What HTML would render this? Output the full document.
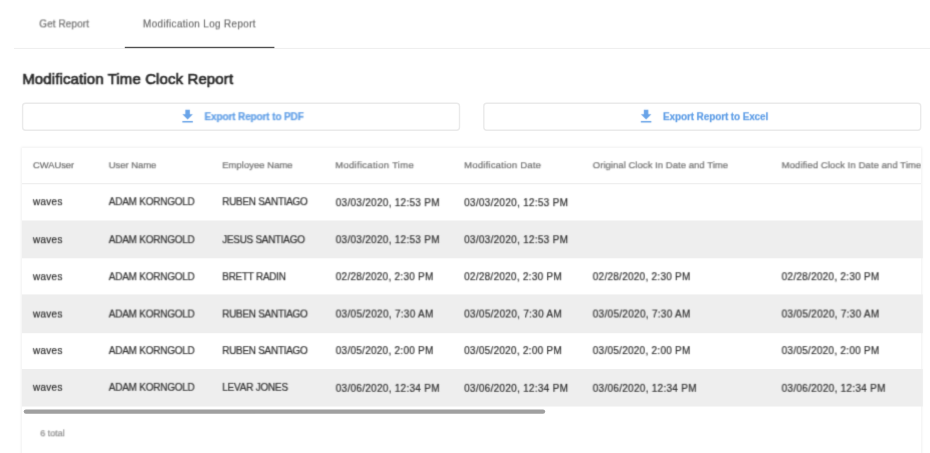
<!DOCTYPE html>
<html>
<head>
<meta charset="utf-8">
<title>Modification Time Clock Report</title>
<style>
*{box-sizing:border-box;margin:0;padding:0}
html,body{width:930px;height:453px;overflow:hidden;background:#fff}
body{font-family:"Liberation Sans",sans-serif;position:relative}
.a{position:absolute}
.t{position:absolute;left:0;top:0;white-space:nowrap;height:20px;line-height:20px;transform-origin:0 0;filter:url(#sb);-webkit-text-stroke:0.2px currentColor}
#bg{position:absolute;left:0;top:0}
nav,main,table,thead,tbody,tr{display:contents}
td:empty{display:none}
th,td,h2,a,button.t{display:block;font-weight:normal;text-align:left;border:0;background:none;font-family:inherit;text-decoration:none}
.ic{position:absolute;filter:url(#sb)}
.card{left:22px;top:148px;width:899px;height:320px;background:#fff;box-shadow:0 0 2.5px 1px rgba(0,0,0,.06)}
.btn{top:103px;height:28px;width:438px;border:1px solid #e2e2e2;border-radius:3px;background:#fff}
#txt{position:absolute;left:0;top:0;width:921px;height:453px;overflow:hidden}
</style>
</head>
<body>
<div class="a card"></div>
<svg id="bg" width="930" height="453" viewBox="0 0 930 453">
<defs><filter id="sb" x="-2%" y="-20%" width="104%" height="140%" color-interpolation-filters="sRGB"><feConvolveMatrix order="3" kernelMatrix="0.011 0.084 0.011 0.084 0.62 0.084 0.011 0.084 0.011" divisor="1" edgeMode="none" preserveAlpha="false"/></filter></defs>
<rect x="22.6" y="103.3" width="436.9" height="26.9" rx="3" fill="#fff" stroke="#eaeaea" stroke-width="1.4"/>
<rect x="483.8" y="103.3" width="436.9" height="26.9" rx="3" fill="#fff" stroke="#eaeaea" stroke-width="1.4"/>
<rect x="14" y="47.9" width="916" height="1" fill="#eeeeee"/>
<rect x="124.8" y="46.8" width="149.6" height="1.3" fill="#505050"/>
<rect x="22" y="183.2" width="899" height="1" fill="#ebebeb"/>
<rect x="22" y="220.5" width="900.8" height="37.8" fill="#eeeeee"/>
<rect x="22" y="294.4" width="900.8" height="38.8" fill="#eeeeee"/>
<rect x="22" y="369.0" width="900.8" height="37.5" fill="#eeeeee"/>
<rect x="23.7" y="409.4" width="521.5" height="4.4" rx="2.2" fill="#a0a0a0"/>
</svg>
<svg class="ic" style="left:176px;top:105px" width="22" height="22" viewBox="0 0 22 22"><path transform="translate(2.6 2.6) scale(0.75)" fill="#68a3e8" d="M19 9h-4V3H9v6H5l7 7 7-7zM5 18v2h14v-2H5z"/></svg>
<svg class="ic" style="left:634px;top:105px" width="22" height="22" viewBox="0 0 22 22"><path transform="translate(3.1 2.6) scale(0.75)" fill="#68a3e8" d="M19 9h-4V3H9v6H5l7 7 7-7zM5 18v2h14v-2H5z"/></svg>
<div id="txt">
<nav>
<a class="t" style="transform:translate(39.30px,14.43px) rotate(0.0001deg);font-size:10px;color:#6f6f6f;letter-spacing:0.098px;">Get Report</a>
<a class="t" style="transform:translate(142.90px,14.43px) rotate(0.0001deg);font-size:10px;color:#6f6f6f;letter-spacing:0.317px;">Modification Log Report</a>
</nav>
<main>
<h2 class="t" style="transform:translate(22.30px,69.09px) rotate(0.0001deg);font-size:15px;color:#262626;-webkit-text-stroke:0.65px #262626;letter-spacing:0.111px;">Modification Time Clock Report</h2>
<button class="t" type="button" style="transform:translate(204.50px,107.23px) rotate(0.0001deg);font-size:10px;color:#5e9de6;font-weight:bold;letter-spacing:-0.125px;">Export Report to PDF</button>
<button class="t" type="button" style="transform:translate(663.00px,107.23px) rotate(0.0001deg);font-size:10px;color:#5e9de6;font-weight:bold;letter-spacing:-0.120px;">Export Report to Excel</button>
<table>
<thead>
<tr>
<th class="t" style="transform:translate(32.90px,155.28px) rotate(0.0001deg);font-size:9.5px;color:#6e6e6e;letter-spacing:-0.129px;">CWAUser</th>
<th class="t" style="transform:translate(108.70px,155.28px) rotate(0.0001deg);font-size:9.5px;color:#6e6e6e;letter-spacing:-0.056px;">User Name</th>
<th class="t" style="transform:translate(222.30px,155.28px) rotate(0.0001deg);font-size:9.5px;color:#6e6e6e;letter-spacing:0.014px;">Employee Name</th>
<th class="t" style="transform:translate(335.30px,155.28px) rotate(0.0001deg);font-size:9.5px;color:#6e6e6e;letter-spacing:0.286px;">Modification Time</th>
<th class="t" style="transform:translate(464.20px,155.28px) rotate(0.0001deg);font-size:9.5px;color:#6e6e6e;letter-spacing:0.218px;">Modification Date</th>
<th class="t" style="transform:translate(592.70px,155.28px) rotate(0.0001deg);font-size:9.5px;color:#6e6e6e;letter-spacing:0.039px;">Original Clock In Date and Time</th>
<th class="t" style="transform:translate(781.60px,155.28px) rotate(0.0001deg);font-size:9.5px;color:#6e6e6e;letter-spacing:0.077px;">Modified Clock In Date and Time</th>
</tr>
</thead>
<tbody>
<tr>
<td class="t" style="transform:translate(32.90px,192.23px) rotate(0.0001deg);font-size:10px;color:#2e2e2e;letter-spacing:0.260px;">waves</td>
<td class="t" style="transform:translate(108.70px,192.23px) rotate(0.0001deg);font-size:10px;color:#2e2e2e;letter-spacing:-0.234px;">ADAM KORNGOLD</td>
<td class="t" style="transform:translate(222.30px,192.23px) rotate(0.0001deg);font-size:10px;color:#2e2e2e;letter-spacing:-0.298px;">RUBEN SANTIAGO</td>
<td class="t" style="transform:translate(335.70px,193.23px) rotate(0.0001deg);font-size:10px;color:#2e2e2e;letter-spacing:0.283px;">03/03/2020, 12:53 PM</td>
<td class="t" style="transform:translate(464.20px,193.23px) rotate(0.0001deg);font-size:10px;color:#2e2e2e;letter-spacing:0.283px;">03/03/2020, 12:53 PM</td>
<td></td>
<td></td>
</tr>
<tr>
<td class="t" style="transform:translate(32.90px,230.23px) rotate(0.0001deg);font-size:10px;color:#2e2e2e;letter-spacing:0.260px;">waves</td>
<td class="t" style="transform:translate(108.70px,230.23px) rotate(0.0001deg);font-size:10px;color:#2e2e2e;letter-spacing:-0.234px;">ADAM KORNGOLD</td>
<td class="t" style="transform:translate(222.30px,230.23px) rotate(0.0001deg);font-size:10px;color:#2e2e2e;letter-spacing:-0.307px;">JESUS SANTIAGO</td>
<td class="t" style="transform:translate(335.70px,230.23px) rotate(0.0001deg);font-size:10px;color:#2e2e2e;letter-spacing:0.283px;">03/03/2020, 12:53 PM</td>
<td class="t" style="transform:translate(464.20px,230.23px) rotate(0.0001deg);font-size:10px;color:#2e2e2e;letter-spacing:0.283px;">03/03/2020, 12:53 PM</td>
<td></td>
<td></td>
</tr>
<tr>
<td class="t" style="transform:translate(32.90px,267.23px) rotate(0.0001deg);font-size:10px;color:#2e2e2e;letter-spacing:0.260px;">waves</td>
<td class="t" style="transform:translate(108.70px,267.23px) rotate(0.0001deg);font-size:10px;color:#2e2e2e;letter-spacing:-0.234px;">ADAM KORNGOLD</td>
<td class="t" style="transform:translate(222.30px,267.23px) rotate(0.0001deg);font-size:10px;color:#2e2e2e;letter-spacing:-0.280px;">BRETT RADIN</td>
<td class="t" style="transform:translate(335.70px,267.23px) rotate(0.0001deg);font-size:10px;color:#2e2e2e;letter-spacing:0.263px;">02/28/2020, 2:30 PM</td>
<td class="t" style="transform:translate(464.20px,267.23px) rotate(0.0001deg);font-size:10px;color:#2e2e2e;letter-spacing:0.263px;">02/28/2020, 2:30 PM</td>
<td class="t" style="transform:translate(592.70px,267.23px) rotate(0.0001deg);font-size:10px;color:#2e2e2e;letter-spacing:0.263px;">02/28/2020, 2:30 PM</td>
<td class="t" style="transform:translate(781.60px,267.23px) rotate(0.0001deg);font-size:10px;color:#2e2e2e;letter-spacing:0.263px;">02/28/2020, 2:30 PM</td>
</tr>
<tr>
<td class="t" style="transform:translate(32.90px,304.53px) rotate(0.0001deg);font-size:10px;color:#2e2e2e;letter-spacing:0.260px;">waves</td>
<td class="t" style="transform:translate(108.70px,304.53px) rotate(0.0001deg);font-size:10px;color:#2e2e2e;letter-spacing:-0.234px;">ADAM KORNGOLD</td>
<td class="t" style="transform:translate(222.30px,304.53px) rotate(0.0001deg);font-size:10px;color:#2e2e2e;letter-spacing:-0.298px;">RUBEN SANTIAGO</td>
<td class="t" style="transform:translate(335.70px,304.53px) rotate(0.0001deg);font-size:10px;color:#2e2e2e;letter-spacing:0.295px;">03/05/2020, 7:30 AM</td>
<td class="t" style="transform:translate(464.20px,304.53px) rotate(0.0001deg);font-size:10px;color:#2e2e2e;letter-spacing:0.295px;">03/05/2020, 7:30 AM</td>
<td class="t" style="transform:translate(592.70px,304.53px) rotate(0.0001deg);font-size:10px;color:#2e2e2e;letter-spacing:0.295px;">03/05/2020, 7:30 AM</td>
<td class="t" style="transform:translate(781.60px,304.53px) rotate(0.0001deg);font-size:10px;color:#2e2e2e;letter-spacing:0.295px;">03/05/2020, 7:30 AM</td>
</tr>
<tr>
<td class="t" style="transform:translate(32.90px,341.13px) rotate(0.0001deg);font-size:10px;color:#2e2e2e;letter-spacing:0.260px;">waves</td>
<td class="t" style="transform:translate(108.70px,341.13px) rotate(0.0001deg);font-size:10px;color:#2e2e2e;letter-spacing:-0.234px;">ADAM KORNGOLD</td>
<td class="t" style="transform:translate(222.30px,341.13px) rotate(0.0001deg);font-size:10px;color:#2e2e2e;letter-spacing:-0.298px;">RUBEN SANTIAGO</td>
<td class="t" style="transform:translate(335.70px,341.13px) rotate(0.0001deg);font-size:10px;color:#2e2e2e;letter-spacing:0.263px;">03/05/2020, 2:00 PM</td>
<td class="t" style="transform:translate(464.20px,341.13px) rotate(0.0001deg);font-size:10px;color:#2e2e2e;letter-spacing:0.263px;">03/05/2020, 2:00 PM</td>
<td class="t" style="transform:translate(592.70px,341.13px) rotate(0.0001deg);font-size:10px;color:#2e2e2e;letter-spacing:0.263px;">03/05/2020, 2:00 PM</td>
<td class="t" style="transform:translate(781.60px,341.13px) rotate(0.0001deg);font-size:10px;color:#2e2e2e;letter-spacing:0.263px;">03/05/2020, 2:00 PM</td>
</tr>
<tr>
<td class="t" style="transform:translate(32.90px,377.83px) rotate(0.0001deg);font-size:10px;color:#2e2e2e;letter-spacing:0.260px;">waves</td>
<td class="t" style="transform:translate(108.70px,377.83px) rotate(0.0001deg);font-size:10px;color:#2e2e2e;letter-spacing:-0.234px;">ADAM KORNGOLD</td>
<td class="t" style="transform:translate(222.30px,377.83px) rotate(0.0001deg);font-size:10px;color:#2e2e2e;letter-spacing:-0.227px;">LEVAR JONES</td>
<td class="t" style="transform:translate(335.70px,378.83px) rotate(0.0001deg);font-size:10px;color:#2e2e2e;letter-spacing:0.283px;">03/06/2020, 12:34 PM</td>
<td class="t" style="transform:translate(464.20px,378.83px) rotate(0.0001deg);font-size:10px;color:#2e2e2e;letter-spacing:0.283px;">03/06/2020, 12:34 PM</td>
<td class="t" style="transform:translate(592.70px,378.83px) rotate(0.0001deg);font-size:10px;color:#2e2e2e;letter-spacing:0.283px;">03/06/2020, 12:34 PM</td>
<td class="t" style="transform:translate(781.60px,378.83px) rotate(0.0001deg);font-size:10px;color:#2e2e2e;letter-spacing:0.283px;">03/06/2020, 12:34 PM</td>
</tr>
</tbody>
</table>
<div class="t" style="transform:translate(40.30px,423.34px) rotate(0.0001deg);font-size:9px;color:#8a8a8a;letter-spacing:-0.022px;">6 total</div>
</main>
</div>
</body>
</html>
